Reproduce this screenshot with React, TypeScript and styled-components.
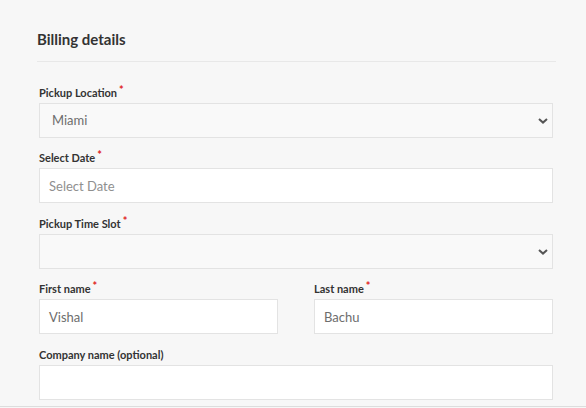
import React from "react";
import styled, { createGlobalStyle } from "styled-components";

const Global = createGlobalStyle`
  html, body { margin: 0; padding: 0; background: #f7f7f7; }
  body { font-family: Lato, "Open Sans", "Liberation Sans", sans-serif; }
  * { box-sizing: border-box; }
`;

const Page = styled.div`
  height: 407px;
  border-bottom: 1px solid #dddddd;
  background: #f7f7f7;
  overflow: hidden;
  padding: 29.75px 30px 0 37px;
`;

const Section = styled.div`
  width: 519px;
`;

const Title = styled.h3`
  margin: 0;
  font-size: 15px;
  line-height: 19px;
  font-weight: 700;
  color: #333333;
  padding-bottom: 12px;
  border-bottom: 1px solid #e8e8e8;
`;

const Form = styled.div`
  padding: 21px 3px 0 2px;
  display: flex;
  flex-direction: column;
  gap: 10.5px;
`;

const Row = styled.div`
  display: grid;
  grid-template-columns: 1fr 1fr;
  column-gap: 36px;
`;

const Field = styled.div`
  display: flex;
  flex-direction: column;
`;

const Label = styled.label`
  display: block;
  height: 20px;
  font-size: 11px;
  line-height: 20px;
  font-weight: 700;
  color: #333333;
  white-space: nowrap;
`;

const Req = styled.span`
  color: #e0231c;
  font-size: 11px;
  line-height: 0;
  position: relative;
  top: -3px;
  margin-left: 2px;
  font-weight: 700;
`;

const Box = styled.div<{ $bg?: string }>`
  height: 35px;
  border: 1px solid #e3e3e3;
  background: ${(p) => p.$bg || "#ffffff"};
  display: flex;
  align-items: center;
  position: relative;
`;

const Value = styled.span<{ $pad?: number; $muted?: boolean }>`
  font-size: 13px;
  color: ${(p) => (p.$muted ? "#8f8f8f" : "#6d6d6d")};
  padding-left: ${(p) => p.$pad ?? 9}px;
`;

const Chevron = styled.svg`
  position: absolute;
  right: 4px;
  top: 14px;
  width: 10px;
  height: 6px;
`;

const Arrow = () => (
  <Chevron viewBox="0 0 10 6">
    <path d="M1 1 L5 4.6 L9 1" fill="none" stroke="#555" strokeWidth="2" />
  </Chevron>
);

export default function App() {
  return (
    <>
      <Global />
      <Page>
        <Section>
          <Title>Billing details</Title>
          <Form>
            <Field>
              <Label>
                Pickup Location<Req>*</Req>
              </Label>
              <Box $bg="#f9f9f9">
                <Value $pad={12}>Miami</Value>
                <Arrow />
              </Box>
            </Field>
            <Field>
              <Label>
                Select Date<Req>*</Req>
              </Label>
              <Box>
                <Value $muted>Select Date</Value>
              </Box>
            </Field>
            <Field>
              <Label>
                Pickup Time Slot<Req>*</Req>
              </Label>
              <Box $bg="#f9f9f9">
                <Arrow />
              </Box>
            </Field>
            <Row>
              <Field>
                <Label>
                  First name<Req>*</Req>
                </Label>
                <Box>
                  <Value>Vishal</Value>
                </Box>
              </Field>
              <Field>
                <Label>
                  Last name<Req>*</Req>
                </Label>
                <Box>
                  <Value>Bachu</Value>
                </Box>
              </Field>
            </Row>
            <Field>
              <Label>Company name (optional)</Label>
              <Box />
            </Field>
          </Form>
        </Section>
      </Page>
    </>
  );
}
